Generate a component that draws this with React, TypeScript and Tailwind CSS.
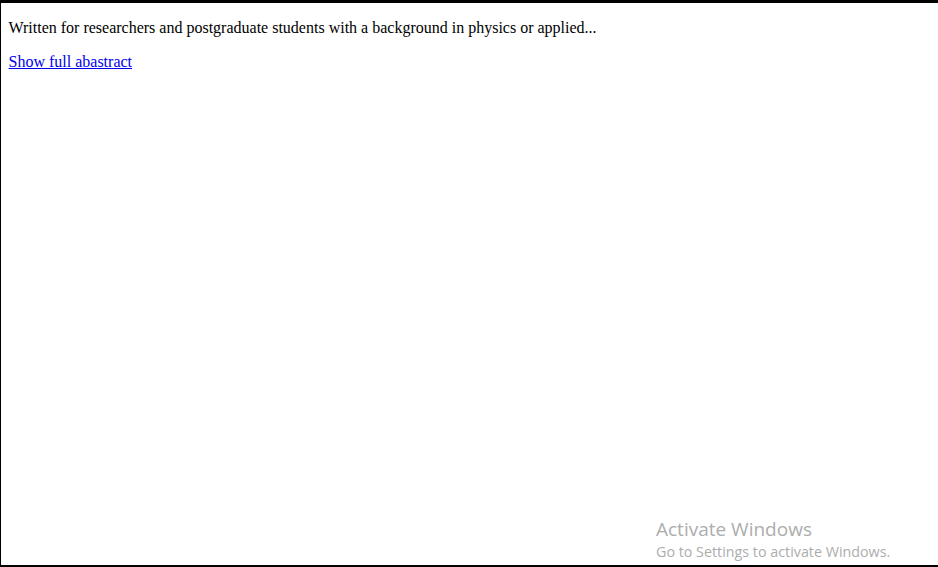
import React from "react";

export default function App() {
  return (
    <div className="relative w-[938px] h-[567px] bg-white border-t-[3px] border-l-[1.5px] border-b-2 border-black overflow-hidden" style={{ fontFamily: '"Liberation Serif", serif' }}>
      <div className="pl-[7.5px] pt-[16px] text-[16px] leading-[18px] text-black">
        <p>Written for researchers and postgraduate students with a background in physics or applied...</p>
        <p className="mt-4">
          <a href="#" className="text-[#0000ee] underline">Show full abastract</a>
        </p>
      </div>
      <div className="absolute left-[655px] top-[513px] text-[#adadad]" style={{ fontFamily: '"Open Sans", "Noto Sans", sans-serif' }}>
        <div className="text-[19px] leading-[26px]">Activate Windows</div>
        <div className="text-[14.3px] leading-[18px] mt-[1px]">Go to Settings to activate Windows.</div>
      </div>
    </div>
  );
}
